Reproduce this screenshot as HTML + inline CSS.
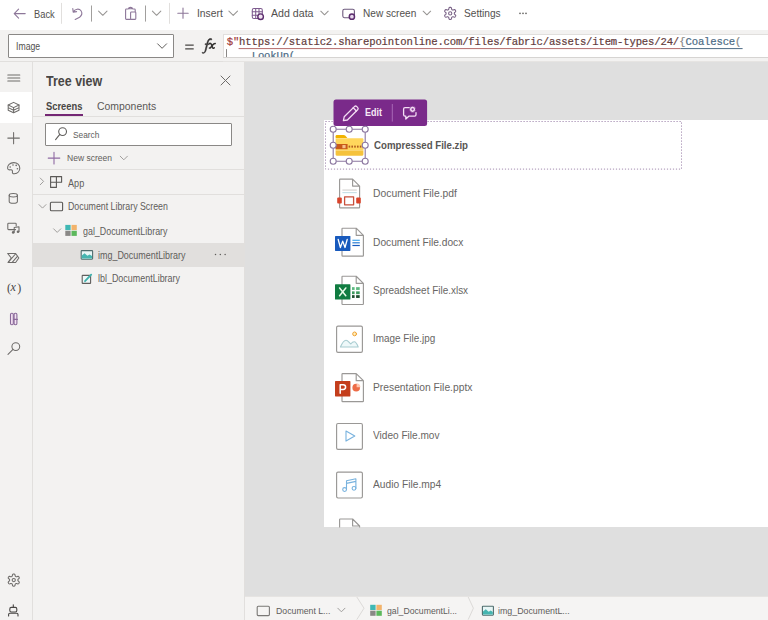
<!DOCTYPE html>
<html><head><meta charset="utf-8"><style>
html,body{margin:0;padding:0;width:768px;height:620px;overflow:hidden;background:#fff;font-family:"Liberation Sans",sans-serif;}
.a{position:absolute;box-sizing:border-box;}
.t{position:absolute;white-space:pre;transform-origin:0 50%;}
svg{position:absolute;overflow:visible;}

</style></head><body>
<!-- toolbar -->
<div class="a" style="left:0;top:0;width:768px;height:30px;background:#fff"></div>
<!-- formula bar -->
<div class="a" style="left:0;top:30px;width:768px;height:32px;background:#f3f2f1"></div>
<div class="a" style="left:8px;top:34px;width:166px;height:24px;background:#fff;border:1px solid #8a8886;border-radius:1px"></div>
<div class="a" style="left:223px;top:34px;width:545px;height:24px;background:#fff;border-left:1px solid #e1dfdd;border-top:1px solid #e1dfdd;border-bottom:1px solid #c8c6c4"></div>
<div class="a" style="left:0;top:61px;width:768px;height:1px;background:#e1dfdd"></div>
<!-- left rail -->
<div class="a" style="left:0;top:62px;width:33px;height:558px;background:#f3f2f1;border-right:1px solid #e1dfdd"></div>
<div class="a" style="left:0;top:92px;width:32px;height:31px;background:#fff"></div>
<!-- tree panel -->
<div class="a" style="left:33px;top:62px;width:212px;height:558px;background:#f3f2f1;border-right:1px solid #e1dfdd"></div>
<div class="a" style="left:45px;top:114px;width:38px;height:2px;background:#742774"></div>
<div class="a" style="left:33px;top:116px;width:211px;height:1px;background:#e1dfdd"></div>
<div class="a" style="left:45px;top:123px;width:187px;height:23px;background:#fff;border:1px solid #8a8886;border-radius:1px"></div>
<div class="a" style="left:33px;top:169px;width:211px;height:1px;background:#e1dfdd"></div>
<div class="a" style="left:33px;top:194px;width:211px;height:1px;background:#e1dfdd"></div>
<div class="a" style="left:33px;top:243px;width:211px;height:24px;background:#e1dfdd"></div>
<!-- canvas -->
<div class="a" style="left:245px;top:62px;width:523px;height:534px;background:#dfdfdf"></div>
<div class="a" style="left:324px;top:120px;width:444px;height:407px;background:#fff"></div>
<!-- bottom bar -->
<div class="a" style="left:245px;top:596px;width:523px;height:24px;background:#f5f4f3;border-top:1px solid #e6e4e2"></div>

<svg style="left:0;top:0" width="768" height="620" viewBox="0 0 768 620">
<g fill="none" stroke-linecap="round" stroke-linejoin="round">
<!-- ===== toolbar ===== -->
<g stroke="#8d7799" stroke-width="1.1">
  <path d="M25.2 13.6H14.2M18.6 9.1L14.2 13.6L18.6 18.1"/>
  <path d="M72.8 8.6L73.2 12.1L76.6 11.6M73.2 12C75 8.8 79.2 8.2 81 10.8C82.6 13.2 81.6 15.6 79.6 17.2L75.2 19.4"/>
  <path d="M128 9H126.4Q125.6 9 125.6 9.8V18.6Q125.6 19.4 126.4 19.4H130.4M133 9H134.4Q135.2 9 135.2 9.8V11.6M128.4 8.8Q128.6 7.4 130.5 7.4Q132.4 7.4 132.6 8.8Z"/>
  <rect x="130.6" y="12" width="5.2" height="7.4" rx="0.8"/>
  <path d="M183 8.1V18.3M177.8 13.2H188.2"/>
</g>
<g stroke="#e1dfdd" stroke-width="1"><path d="M61.5 3.3V23.4M169.5 3.3V23.4"/></g>
<g stroke="#a19f9d" stroke-width="1"><path d="M91.5 5.9V21.2M145.5 5.9V21.2"/></g>
<g stroke="#979593" stroke-width="1.05"><path d="M98.6 11.1L102.8 15.3L107 11.1M152.4 11.1L156.6 15.3L160.8 11.1M228.9 11.1L233.2 15.4L237.5 11.1M320.8 11.2L324.5 14.8L328.2 11.2M423.2 11.2L426.9 14.8L430.6 11.2"/></g>
<!-- add data -->
<g stroke="#7d5a8e" stroke-width="1.05">
  <rect x="252.3" y="8.5" width="10" height="10" rx="1.6"/>
  <path d="M255.7 8.5V18.5M259 8.5V14M252.3 11.8H262.3M252.3 15.2H257.6"/>
</g>
<circle cx="260.6" cy="16.7" r="2.8" fill="#f3e6f3" stroke="#5c2d6e" stroke-width="1.4"/>
<!-- new screen -->
<rect x="342.8" y="9.3" width="11.6" height="8.4" rx="1.6" stroke="#6e5a7e" stroke-width="1.1"/>
<circle cx="351.9" cy="16.7" r="2.6" fill="#e8d9ee" stroke="#5c2d6e" stroke-width="1.5"/>
<!-- gear -->
<path stroke="#7b6488" stroke-width="1.1" d="M450.20 7.35L450.52 7.36L450.83 7.41L451.13 7.54L451.38 7.85L451.52 8.47L451.60 9.10L451.73 9.42L451.90 9.58L452.09 9.70L452.27 9.81L452.46 9.91L452.66 10.02L452.88 10.09L453.23 10.04L453.81 9.79L454.42 9.60L454.81 9.66L455.07 9.86L455.27 10.11L455.44 10.38L455.59 10.66L455.70 10.95L455.74 11.27L455.60 11.65L455.13 12.08L454.63 12.46L454.41 12.73L454.36 12.96L454.35 13.18L454.35 13.40L454.35 13.62L454.36 13.84L454.41 14.07L454.63 14.34L455.13 14.72L455.60 15.15L455.74 15.53L455.70 15.85L455.59 16.14L455.44 16.42L455.27 16.69L455.07 16.94L454.81 17.14L454.42 17.20L453.81 17.01L453.23 16.76L452.88 16.71L452.66 16.78L452.46 16.89L452.27 16.99L452.09 17.10L451.90 17.22L451.73 17.38L451.60 17.70L451.52 18.33L451.38 18.95L451.13 19.26L450.83 19.39L450.52 19.44L450.20 19.45L449.88 19.44L449.57 19.39L449.27 19.26L449.02 18.95L448.88 18.33L448.80 17.70L448.67 17.38L448.50 17.22L448.31 17.10L448.12 16.99L447.94 16.89L447.74 16.78L447.52 16.71L447.17 16.76L446.59 17.01L445.98 17.20L445.59 17.14L445.33 16.94L445.13 16.69L444.96 16.43L444.81 16.14L444.70 15.85L444.66 15.53L444.80 15.15L445.27 14.72L445.77 14.34L445.99 14.07L446.04 13.84L446.05 13.62L446.05 13.40L446.05 13.18L446.04 12.96L445.99 12.73L445.77 12.46L445.27 12.08L444.80 11.65L444.66 11.27L444.70 10.95L444.81 10.66L444.96 10.38L445.13 10.11L445.33 9.86L445.59 9.66L445.98 9.60L446.59 9.79L447.17 10.04L447.52 10.09L447.74 10.02L447.94 9.91L448.12 9.81L448.31 9.70L448.50 9.58L448.67 9.42L448.80 9.10L448.88 8.47L449.02 7.85L449.27 7.54L449.57 7.41L449.88 7.36Z"/>
<circle cx="450.2" cy="13.4" r="1.6" stroke="#7b6488" stroke-width="1.1"/>
<g fill="#605e5c" stroke="none"><circle cx="520" cy="13.4" r="0.8"/><circle cx="523" cy="13.4" r="0.8"/><circle cx="526" cy="13.4" r="0.8"/></g>

<!-- ===== formula bar ===== -->
<path stroke="#605e5c" stroke-width="1" d="M157.6 43.8L162.1 48.3L166.6 43.8"/>
<g stroke="#484644" stroke-width="1.4" stroke-linecap="butt"><path d="M185.2 45.1H193.7M185.2 48.9H193.7"/></g>
<path stroke="#8a8886" stroke-width="1" d="M226.5 49.5V58"/>
<path stroke="#b36a6a" stroke-width="1" stroke-linecap="butt" d="M238.6 48.6H680.6"/>
<path stroke="#4d6b85" stroke-width="1" stroke-linecap="butt" d="M680.6 48.6H742.6"/>

<!-- ===== left rail ===== -->
<g stroke="#6e6c6a" stroke-width="1.05">
  <path d="M7.8 75H19.8M7.8 78H19.8M7.8 81H19.8"/>
  <path d="M13.6 102.4L19 105L13.6 107.6L8.2 105Z"/>
  <path d="M8.2 105V110.2L13.6 112.8L19 110.2V105M8.2 107.6L13.6 110.2L19 107.6M13.6 107.6V112.8"/>
  <path d="M13.6 132.4V143.8M7.8 138.1H19.4"/>
  <path d="M13.8 162.6C9.6 162.6 7.4 165.6 7.6 168.2C7.8 170 9.6 170 10.8 169.8C12.4 169.6 12.6 171 12.4 172C12.2 173.2 13 174 14.4 173.8C17.8 173.4 19.8 170.8 19.8 168.2C19.8 165 17.2 162.6 13.8 162.6Z"/>
  <ellipse cx="13.3" cy="195.2" rx="4.1" ry="1.7"/>
  <path d="M9.2 195.2V201.4Q9.2 203.2 13.3 203.2Q17.4 203.2 17.4 201.4V195.2"/>
  <path d="M15.6 229.6H8.6Q7.8 229.6 7.8 228.8V224Q7.8 223.2 8.6 223.2H15.4Q16.2 223.2 16.2 224V226"/>
  <path d="M14.2 232.2V227.4L19 226.8V231.6"/>
  <path d="M7.7 253.5H15.6L18.8 258L15.6 262.5H8L11.3 258Z"/>
  <path d="M8.4 262.1L15.5 254M12.2 262.3L17.4 256.3"/>
  <circle cx="15.8" cy="346.6" r="3.9"/>
  <path d="M13 349.4L8 354.4"/>
</g>
<g fill="#6e6c6a" stroke="none">
  <circle cx="10.2" cy="167" r="0.8"/><circle cx="13" cy="165" r="0.8"/><circle cx="16.2" cy="165.4" r="0.8"/><circle cx="17.4" cy="168.8" r="0.8"/>
  <circle cx="13.2" cy="232.4" r="1.3"/><circle cx="18" cy="231.8" r="1.3"/>
</g>
<g stroke="#8a6a9a" stroke-width="1.1" fill="#f3e3f3">
  <rect x="10.5" y="313.3" width="2.8" height="11.4" rx="1.2"/>
  <rect x="14.1" y="313.3" width="2.8" height="11.4" rx="1.2"/>
  <path d="M13.6 319.4H17.4"/>
</g>
<!-- gear bottom -->
<path stroke="#6e6c6a" stroke-width="1.05" d="M13.75 574.05L14.07 574.06L14.38 574.11L14.68 574.24L14.93 574.55L15.07 575.17L15.15 575.80L15.28 576.12L15.45 576.28L15.64 576.40L15.82 576.51L16.01 576.61L16.21 576.72L16.43 576.79L16.78 576.74L17.36 576.49L17.97 576.30L18.36 576.36L18.62 576.56L18.82 576.81L18.99 577.08L19.14 577.36L19.25 577.65L19.29 577.97L19.15 578.35L18.68 578.78L18.18 579.16L17.96 579.43L17.91 579.66L17.90 579.88L17.90 580.10L17.90 580.32L17.91 580.54L17.96 580.77L18.18 581.04L18.68 581.42L19.15 581.85L19.29 582.23L19.25 582.55L19.14 582.84L18.99 583.12L18.82 583.39L18.62 583.64L18.36 583.84L17.97 583.90L17.36 583.71L16.78 583.46L16.43 583.41L16.21 583.48L16.01 583.59L15.82 583.69L15.64 583.80L15.45 583.92L15.28 584.08L15.15 584.40L15.07 585.03L14.93 585.65L14.68 585.96L14.38 586.09L14.07 586.14L13.75 586.15L13.43 586.14L13.12 586.09L12.82 585.96L12.57 585.65L12.43 585.03L12.35 584.40L12.22 584.08L12.05 583.92L11.86 583.80L11.68 583.69L11.49 583.59L11.29 583.48L11.07 583.41L10.72 583.46L10.14 583.71L9.53 583.90L9.14 583.84L8.88 583.64L8.68 583.39L8.51 583.12L8.36 582.84L8.25 582.55L8.21 582.23L8.35 581.85L8.82 581.42L9.32 581.04L9.54 580.77L9.59 580.54L9.60 580.32L9.60 580.10L9.60 579.88L9.59 579.66L9.54 579.43L9.32 579.16L8.82 578.78L8.35 578.35L8.21 577.97L8.25 577.65L8.36 577.36L8.51 577.08L8.68 576.81L8.88 576.56L9.14 576.36L9.53 576.30L10.14 576.49L10.72 576.74L11.07 576.79L11.29 576.72L11.49 576.61L11.68 576.51L11.86 576.40L12.05 576.28L12.22 576.12L12.35 575.80L12.43 575.17L12.57 574.55L12.82 574.24L13.12 574.11L13.43 574.06Z"/>
<circle cx="13.75" cy="580.1" r="1.6" stroke="#6e6c6a" stroke-width="1.1"/>
<!-- bot -->
<g stroke="#484644" stroke-width="1.1">
  <path d="M13.3 604.8V607"/>
  <rect x="9.8" y="607.4" width="7" height="4.6" rx="1.5"/>
  <path d="M8.6 616V614.4Q8.6 613.2 9.8 613.2H16.8Q18 613.2 18 614.4V616"/>
</g>
</g>
</svg>
<svg style="left:0;top:0" width="768" height="620" viewBox="0 0 768 620">
<path fill="#323130" stroke="#323130" stroke-width="0.6" d="M211.4 38.6C210 38.2 208.6 38.8 207.8 40.4C207.3 41.4 207 42.6 206.7 43.8H205V44.6H206.5L205 50.6C204.6 52.2 204 52.8 203.2 52.6C202.8 52.5 202.6 52.2 202.3 52.4C202 52.6 202 53 202.4 53.2C203.4 53.6 204.6 53.2 205.4 52C206 51 206.3 49.8 206.6 48.6L207.6 44.6H209.2V43.8H207.8C208.1 42.6 208.4 41.2 209 40.4C209.4 39.8 210 39.6 210.6 39.8C211 40 211.2 40.2 211.5 40C211.8 39.8 211.8 38.8 211.4 38.6Z"/>
<path fill="none" stroke="#323130" stroke-width="1.5" stroke-linecap="round" d="M209.6 43.4C210.6 43.2 211.2 43.8 211.6 45L212.6 47.6C212.9 48.2 213.4 48.4 214.2 47.8M215.2 43.6C214.2 43.4 213.2 44.4 212.2 45.6L210.6 47.6C210.2 48 209.8 48.2 209.4 48"/>
</svg>
<svg style="left:0;top:0" width="768" height="620" viewBox="0 0 768 620">
<g fill="none" stroke-linecap="round" stroke-linejoin="round">
<!-- ===== tree panel ===== -->
<path stroke="#6e6c6a" stroke-width="1" d="M221 76L230 85M230 76L221 85"/>
<g stroke="#605e5c" stroke-width="1.1">
  <circle cx="62.6" cy="131.6" r="3.9"/>
  <path d="M59.8 134.4L55.6 139.6"/>
</g>
<path stroke="#8f6aa3" stroke-width="1.1" d="M54 152.2V164M48.2 158.1H59.8"/>
<g stroke="#a19f9d" stroke-width="1">
  <path d="M120.2 156.2L123.8 159.8L127.4 156.2"/>
  <path d="M40.2 178L43.6 181.4L40.2 184.8"/>
  <path d="M39 204.6L42.5 208.1L46 204.6"/>
  <path d="M53.6 228.8L57.2 232.4L60.8 228.8"/>
</g>
<g stroke="#5a5856" stroke-width="1.1">
  <path d="M50.6 176.6H61.6V182.3H56.4V187.4H50.6Z M50.6 182.3H56.4V176.6"/>
  <rect x="50.4" y="202.3" width="12.2" height="8.5" rx="1"/>
</g>
<g stroke="none">
  <rect x="65.3" y="224.9" width="5.3" height="5.2" fill="#3fb8b4"/>
  <rect x="71.5" y="224.9" width="5.3" height="5.2" fill="#f2b36b"/>
  <rect x="65.3" y="230.8" width="5.3" height="5.1" fill="#8a8886"/>
  <rect x="71.5" y="230.8" width="5.3" height="5.1" fill="#5cb85c"/>
</g>
<!-- img icon -->
<rect x="81.2" y="250.6" width="11.4" height="8.6" rx="0.6" fill="#e8f6f6" stroke="#4f6d6e" stroke-width="1.1"/>
<path fill="#46b5b0" stroke="none" d="M81.8 258.6V255.6L84.6 253.2L87.4 255.8L89.6 254.4L92 256V258.6Z"/>
<!-- lbl icon -->
<rect x="82.2" y="275.4" width="8.4" height="8" rx="0.5" fill="#eef7f7" stroke="#605e5c" stroke-width="1.1"/>
<path stroke="#3fb0ab" stroke-width="1.8" d="M85 281.2L91.2 274.6"/>
<g fill="#605e5c" stroke="none"><circle cx="215.5" cy="254.4" r="0.75"/><circle cx="220.3" cy="254.4" r="0.75"/><circle cx="225.1" cy="254.4" r="0.75"/></g>

<!-- ===== canvas ===== -->
<!-- dotted selection -->
<rect x="325.5" y="121.5" width="356" height="47.6" stroke="#a48cb0" stroke-width="1" stroke-dasharray="1.2 1.8" stroke-linecap="butt"/>
<!-- edit toolbar -->
<rect x="333.5" y="99.5" width="93.6" height="26.5" rx="2.5" fill="#7a2a8a" stroke="none"/>
<g stroke="#f3def3" stroke-width="1.3">
  <path d="M343.4 120.6L344.2 116.8L354.4 106.6Q355.6 105.4 356.8 106.6L357.6 107.4Q358.8 108.6 357.6 109.8L347.4 120L343.4 120.6Z"/>
  <path d="M353.2 107.8L356.4 111"/>
  <path d="M405 107.6H410M416 112.6V114.8Q416 116.2 414.6 116.2H408.8L405.8 119V116.2H405Q403.6 116.2 403.6 114.8V109Q403.6 107.6 405 107.6"/>
</g>
<path stroke="#a868b6" stroke-width="1" d="M392.3 104.4V121.2"/>
<circle cx="412.6" cy="109.3" r="3.1" fill="#f3def3" stroke="#7a2a8a" stroke-width="0.7"/>
<circle cx="412.6" cy="109.3" r="1.1" fill="#8a3a9a" stroke="none"/>

<!-- row 0: zip folder -->
<path fill="#f1b300" stroke="none" d="M335.6 136.2Q335.6 135 336.8 135H343.6Q344.6 135 345.4 135.8L347.4 138H335.6Z"/>
<path fill="#ffd65c" stroke="none" d="M335.6 138.2H362.4Q363.4 138.2 363.4 139.2V150.5H335.6Z"/>
<path fill="#f5c23c" stroke="none" d="M335.6 150.5H363.4V154.6Q363.4 155.7 362.3 155.7H336.7Q335.6 155.7 335.6 154.6Z"/>
<rect x="335.6" y="144" width="12" height="5.2" fill="#c85a1a" stroke="none"/>
<rect x="342.4" y="145" width="3.2" height="3.2" fill="#f6c08a" stroke="none"/>
<g fill="#b05a1e" stroke="none"><rect x="348.6" y="145.6" width="1.6" height="2"/><rect x="351.4" y="145.6" width="1.6" height="2"/><rect x="354.2" y="145.6" width="1.6" height="2"/><rect x="357" y="145.6" width="1.6" height="2"/><rect x="359.8" y="145.6" width="1.6" height="2"/></g>
<!-- selection handles -->
<g stroke="#8c77a0" stroke-width="1.1">
  <rect x="333.2" y="129.2" width="32" height="32"/>
</g>
<g fill="#ffffff" stroke="#8c77a0" stroke-width="1.1">
  <circle cx="333.2" cy="129.2" r="3"/><circle cx="349.2" cy="129.2" r="3"/><circle cx="365.2" cy="129.2" r="3"/>
  <circle cx="333.2" cy="145.2" r="3"/><circle cx="365.2" cy="145.2" r="3"/>
  <circle cx="333.2" cy="161.2" r="3"/><circle cx="349.2" cy="161.2" r="3"/><circle cx="365.2" cy="161.2" r="3"/>
</g>

<!-- row 1: pdf (top 169.45) -->
<g transform="translate(0,169.45)">
  <path stroke="#9a9896" stroke-width="1.15" d="M339.6 10.2Q339.6 9.6 340.2 9.6H352.6L359.6 16.6V37.8Q359.6 38.4 359 38.4H340.2Q339.6 38.4 339.6 37.8Z M352.6 9.6V16.6H359.6"/>
  <path stroke="#c8c6c4" stroke-width="0.9" d="M342.8 20.6H356.4"/>
  <path stroke="#b8d8e0" stroke-width="0.9" d="M342.8 23.2H356.4"/>
  <rect x="344.6" y="27.4" width="9" height="8" stroke="#c8503c" stroke-width="1.3"/>
  <rect x="337.2" y="28" width="4.6" height="6" rx="1" fill="#d9442b" stroke="none"/>
  <rect x="356.2" y="28" width="4.6" height="6" rx="1" fill="#d9442b" stroke="none"/>
</g>
<!-- row 2: word (top 217.9) -->
<g transform="translate(0,217.9)">
  <path stroke="#9a9896" stroke-width="1.15" d="M342 10.9Q342 10.3 342.6 10.3H356.2L363.4 17.4V37.6Q363.4 38.2 362.8 38.2H342.6Q342 38.2 342 37.6Z M356.2 10.3V17.4H363.4"/>
  <path stroke="#41a5ee" stroke-width="1.2" stroke-linecap="butt" d="M352.4 22.4H359.8"/>
  <path stroke="#2b7cd3" stroke-width="1.2" stroke-linecap="butt" d="M352.4 24.9H359.8"/>
  <path stroke="#185abd" stroke-width="1.2" stroke-linecap="butt" d="M352.4 27.6H359.8"/>
  <rect x="335" y="18" width="15.4" height="15" rx="0.6" fill="#185abd" stroke="none"/>
  <path stroke="#ffffff" stroke-width="1.3" d="M338.2 21.6L340.4 29.6L342.7 23.2L345 29.6L347.2 21.6"/>
</g>
<!-- row 3: excel (top 266.35) -->
<g transform="translate(0,266.35)">
  <path stroke="#9a9896" stroke-width="1.15" d="M342 10.5Q342 9.9 342.6 9.9H356.2L363.4 17V37.5Q363.4 38.1 362.8 38.1H342.6Q342 38.1 342 37.5Z M356.2 9.9V17H363.4"/>
  <g stroke="none">
    <rect x="352" y="20.8" width="2.6" height="2.8" fill="#5cb87f"/><rect x="356.1" y="20.8" width="3.6" height="2.8" fill="#5cb87f"/>
    <rect x="352" y="25" width="2.6" height="2.8" fill="#3d9a5e"/><rect x="356.1" y="25" width="3.6" height="2.8" fill="#3d9a5e"/>
    <rect x="352" y="28.8" width="2.6" height="2.8" fill="#1e4d2e"/><rect x="356.1" y="28.8" width="3.6" height="2.8" fill="#1e4d2e"/>
  </g>
  <rect x="335" y="17.8" width="15.4" height="15.4" rx="0.6" fill="#107c41" stroke="none"/>
  <path stroke="#e8fbe8" stroke-width="1.5" d="M339.6 21.6L345.8 29.4M345.8 21.6L339.6 29.4"/>
</g>
<!-- row 4: image (top 314.8) -->
<g transform="translate(0,314.8)">
  <rect x="336.6" y="11.4" width="25.8" height="26.2" rx="1.4" stroke="#9a9896" stroke-width="1.15"/>
  <circle cx="354.6" cy="19.1" r="1.9" fill="#fff0c0" stroke="#f0a030" stroke-width="1"/>
  <path stroke="#a8ccd0" stroke-width="1.1" fill="#eef8f9" d="M340.4 32.2C342 28.6 344 25.4 346 25.4C348 25.4 349.4 28.4 350.8 29.2C352 27.6 353 27 354.2 27C355.8 27 357.2 29.6 358.2 32.2Z"/>
</g>
<!-- row 5: ppt (top 363.25) -->
<g transform="translate(0,363.25)">
  <path stroke="#9a9896" stroke-width="1.15" d="M342 10.9Q342 10.3 342.6 10.3H356.2L363.4 17.4V37.8Q363.4 38.4 362.8 38.4H342.6Q342 38.4 342 37.8Z M356.2 10.3V17.4H363.4"/>
  <circle cx="356.2" cy="24.4" r="3.8" fill="#ed6c47" stroke="none"/>
  <path fill="#ffc6b0" stroke="none" d="M356.6 20.2A3.8 3.8 0 0 1 360.4 24H356.6Z"/>
  <rect x="335" y="17.8" width="15.4" height="15.4" rx="0.6" fill="#c43e1c" stroke="none"/>
  <path stroke="#ffffff" stroke-width="1.5" d="M340.2 30V21.4H343.2Q345.6 21.4 345.6 23.8Q345.6 26.2 343.2 26.2H340.2"/>
</g>
<!-- row 6: video (top 411.7) -->
<g transform="translate(0,411.7)">
  <rect x="336.6" y="11.8" width="25.8" height="25.8" rx="1.4" stroke="#9a9896" stroke-width="1.15"/>
  <path stroke="#78b2de" stroke-width="1.1" d="M346 19.4V29.4L354.8 24.4Z"/>
</g>
<!-- row 7: audio (top 460.15) -->
<g transform="translate(0,460.15)">
  <rect x="336.6" y="12" width="25.8" height="25.8" rx="1.4" stroke="#9a9896" stroke-width="1.15"/>
  <g stroke="#78b2de" stroke-width="1.1">
    <circle cx="344.6" cy="29.4" r="1.9"/><circle cx="354" cy="28.2" r="1.9"/>
    <path d="M346.5 29.4V20.6L355.9 18.6V28.2M346.5 23.2L355.9 21.2"/>
  </g>
</g>
<!-- row 8 partial (top 508.6) -->
<g transform="translate(0,508.6)">
  <path stroke="#9a9896" stroke-width="1.15" d="M339.6 18.4V11Q339.6 10.4 340.2 10.4H352.6L359.6 17.4V18.4 M352.6 10.4V17.4H359.6"/>
</g>

<!-- ===== bottom bar ===== -->
<rect x="257.2" y="606.2" width="12.2" height="9.4" rx="1" stroke="#7a7876" stroke-width="1.1"/>
<path stroke="#a19f9d" stroke-width="1" d="M337.8 608.2L341.4 611.8L345 608.2"/>
<path stroke="#dcdad8" stroke-width="1" stroke-linecap="butt" d="M356.8 597L364 608.2L356.8 619.6M468.2 597L473.4 608.2L468.2 619.6"/>
<g stroke="none">
  <rect x="370.2" y="604.8" width="5.4" height="5.2" fill="#3fb8b4"/>
  <rect x="376.4" y="604.8" width="5.4" height="5.2" fill="#f2b36b"/>
  <rect x="370.2" y="610.7" width="5.4" height="5.1" fill="#8a8886"/>
  <rect x="376.4" y="610.7" width="5.4" height="5.1" fill="#5cb85c"/>
</g>
<rect x="482.4" y="606.2" width="11" height="9" rx="0.6" fill="#e8f6f6" stroke="#4f6d6e" stroke-width="1.1"/>
<path fill="#46b5b0" stroke="none" d="M483 614.6V611.6L485.8 609.2L488.6 611.8L490.8 610.4L492.8 612V614.6Z"/>
</g>
</svg>


<div class="t" style="left:33.70px;top:8.73px;font-size:10.6px;line-height:10.6px;color:#52504e;font-weight:400;font-family:'Liberation Sans', sans-serif;transform:scaleX(0.8785);">Back</div>
<div class="t" style="left:196.70px;top:9.10px;font-size:10.4px;line-height:10.4px;color:#52504e;font-weight:400;font-family:'Liberation Sans', sans-serif;transform:scaleX(0.9923);">Insert</div>
<div class="t" style="left:270.80px;top:9.10px;font-size:10.4px;line-height:10.4px;color:#52504e;font-weight:400;font-family:'Liberation Sans', sans-serif;transform:scaleX(1.0214);">Add data</div>
<div class="t" style="left:362.50px;top:9.10px;font-size:10.4px;line-height:10.4px;color:#52504e;font-weight:400;font-family:'Liberation Sans', sans-serif;transform:scaleX(0.9713);">New screen</div>
<div class="t" style="left:464.20px;top:9.10px;font-size:10.4px;line-height:10.4px;color:#52504e;font-weight:400;font-family:'Liberation Sans', sans-serif;transform:scaleX(0.9748);">Settings</div>
<div class="t" style="left:15.60px;top:42.14px;font-size:10.0px;line-height:10.0px;color:#52504e;font-weight:400;font-family:'Liberation Sans', sans-serif;transform:scaleX(0.8670);">Image</div>
<div class="t" style="left:6.90px;top:282.04px;font-size:12.0px;line-height:12.0px;color:#484644;font-weight:400;font-family:'Liberation Serif', serif;">(</div>
<div class="t" style="left:10.40px;top:281.47px;font-size:12.2px;line-height:12.2px;color:#484644;font-weight:400;font-family:'Liberation Serif', serif;font-style:italic;">x</div>
<div class="t" style="left:17.30px;top:282.04px;font-size:12.0px;line-height:12.0px;color:#484644;font-weight:400;font-family:'Liberation Serif', serif;">)</div>
<div class="t" style="left:45.80px;top:73.95px;font-size:14.0px;line-height:14.0px;color:#484644;font-weight:700;font-family:'Liberation Sans', sans-serif;transform:scaleX(0.8914);">Tree view</div>
<div class="t" style="left:46.00px;top:100.69px;font-size:11.0px;line-height:11.0px;color:#484644;font-weight:700;font-family:'Liberation Sans', sans-serif;transform:scaleX(0.8502);">Screens</div>
<div class="t" style="left:96.70px;top:100.69px;font-size:11.0px;line-height:11.0px;color:#5a5856;font-weight:400;font-family:'Liberation Sans', sans-serif;transform:scaleX(0.9475);">Components</div>
<div class="t" style="left:73.40px;top:130.90px;font-size:9.1px;line-height:9.1px;color:#605e5c;font-weight:400;font-family:'Liberation Sans', sans-serif;transform:scaleX(0.9158);">Search</div>
<div class="t" style="left:67.00px;top:154.11px;font-size:9.2px;line-height:9.2px;color:#5f5d5b;font-weight:400;font-family:'Liberation Sans', sans-serif;transform:scaleX(0.9275);">New screen</div>
<div class="t" style="left:68.00px;top:178.94px;font-size:10.0px;line-height:10.0px;color:#5f5d5b;font-weight:400;font-family:'Liberation Sans', sans-serif;transform:scaleX(0.9103);">App</div>
<div class="t" style="left:68.40px;top:202.38px;font-size:10.3px;line-height:10.3px;color:#5f5d5b;font-weight:400;font-family:'Liberation Sans', sans-serif;transform:scaleX(0.8557);">Document Library Screen</div>
<div class="t" style="left:83.00px;top:226.98px;font-size:10.3px;line-height:10.3px;color:#5f5d5b;font-weight:400;font-family:'Liberation Sans', sans-serif;transform:scaleX(0.8633);">gal_DocumentLibrary</div>
<div class="t" style="left:98.30px;top:251.18px;font-size:10.3px;line-height:10.3px;color:#5f5d5b;font-weight:400;font-family:'Liberation Sans', sans-serif;transform:scaleX(0.8686);">img_DocumentLibrary</div>
<div class="t" style="left:98.30px;top:274.48px;font-size:10.3px;line-height:10.3px;color:#5f5d5b;font-weight:400;font-family:'Liberation Sans', sans-serif;transform:scaleX(0.8683);">lbl_DocumentLibrary</div>
<div class="t" style="left:364.90px;top:106.97px;font-size:11.5px;line-height:11.5px;color:#f6e9f6;font-weight:700;font-family:'Liberation Sans', sans-serif;transform:scaleX(0.7822);">Edit</div>
<div class="t" style="left:373.50px;top:139.66px;font-size:10.8px;line-height:10.8px;color:#585654;font-weight:700;font-family:'Liberation Sans', sans-serif;transform:scaleX(0.8952);">Compressed File.zip</div>
<div class="t" style="left:373.40px;top:188.11px;font-size:10.8px;line-height:10.8px;color:#686664;font-weight:400;font-family:'Liberation Sans', sans-serif;transform:scaleX(0.9575);">Document File.pdf</div>
<div class="t" style="left:373.40px;top:236.56px;font-size:10.8px;line-height:10.8px;color:#686664;font-weight:400;font-family:'Liberation Sans', sans-serif;transform:scaleX(0.9463);">Document File.docx</div>
<div class="t" style="left:373.40px;top:285.01px;font-size:10.8px;line-height:10.8px;color:#686664;font-weight:400;font-family:'Liberation Sans', sans-serif;transform:scaleX(0.9212);">Spreadsheet File.xlsx</div>
<div class="t" style="left:373.40px;top:333.46px;font-size:10.8px;line-height:10.8px;color:#686664;font-weight:400;font-family:'Liberation Sans', sans-serif;transform:scaleX(0.9170);">Image File.jpg</div>
<div class="t" style="left:373.40px;top:381.91px;font-size:10.8px;line-height:10.8px;color:#686664;font-weight:400;font-family:'Liberation Sans', sans-serif;transform:scaleX(0.9518);">Presentation File.pptx</div>
<div class="t" style="left:373.40px;top:430.36px;font-size:10.8px;line-height:10.8px;color:#686664;font-weight:400;font-family:'Liberation Sans', sans-serif;transform:scaleX(0.9337);">Video File.mov</div>
<div class="t" style="left:373.40px;top:478.81px;font-size:10.8px;line-height:10.8px;color:#686664;font-weight:400;font-family:'Liberation Sans', sans-serif;transform:scaleX(0.9456);">Audio File.mp4</div>
<div class="t" style="left:275.80px;top:607.38px;font-size:9.0px;line-height:9.0px;color:#5f5d5b;font-weight:400;font-family:'Liberation Sans', sans-serif;transform:scaleX(0.9709);">Document L...</div>
<div class="t" style="left:386.70px;top:607.38px;font-size:9.0px;line-height:9.0px;color:#5f5d5b;font-weight:400;font-family:'Liberation Sans', sans-serif;transform:scaleX(0.9649);">gal_DocumentLi...</div>
<div class="t" style="left:497.50px;top:607.38px;font-size:9.0px;line-height:9.0px;color:#5f5d5b;font-weight:400;font-family:'Liberation Sans', sans-serif;transform:scaleX(0.9816);">img_DocumentL...</div>
<div class="t" style="left:226.70px;top:37.23px;font-size:10.6px;line-height:10.6px;color:#a13a3a;font-weight:400;font-family:'Liberation Mono', monospace;letter-spacing:-0.161px;-webkit-text-stroke:0.2px;">$"</div>
<div class="t" style="left:239.10px;top:37.23px;font-size:10.6px;line-height:10.6px;color:#633c3c;font-weight:400;font-family:'Liberation Mono', monospace;letter-spacing:-0.161px;-webkit-text-stroke:0.2px;">https://static2.sharepointonline.com/files/fabric/assets/item-types/24/</div>
<div class="t" style="left:679.30px;top:37.23px;font-size:10.6px;line-height:10.6px;color:#8a8886;font-weight:400;font-family:'Liberation Mono', monospace;letter-spacing:-0.161px;-webkit-text-stroke:0.2px;">{</div>
<div class="t" style="left:685.50px;top:37.23px;font-size:10.6px;line-height:10.6px;color:#4d6b85;font-weight:400;font-family:'Liberation Mono', monospace;letter-spacing:-0.161px;-webkit-text-stroke:0.2px;">Coalesce</div>
<div class="t" style="left:735.10px;top:37.23px;font-size:10.6px;line-height:10.6px;color:#8a8886;font-weight:400;font-family:'Liberation Mono', monospace;letter-spacing:-0.161px;-webkit-text-stroke:0.2px;">(</div>
<div class="t" style="left:251.70px;top:51.03px;font-size:10.6px;line-height:10.6px;color:#4d6b85;font-weight:400;font-family:'Liberation Mono', monospace;letter-spacing:-0.161px;-webkit-text-stroke:0.2px;">LookUp(</div>
<div class="a" style="left:223px;top:57px;width:545px;height:5px;background:#f3f2f1;border-top:1px solid #d6d4d2;border-bottom:1px solid #e6e4e2"></div>

</body></html>
